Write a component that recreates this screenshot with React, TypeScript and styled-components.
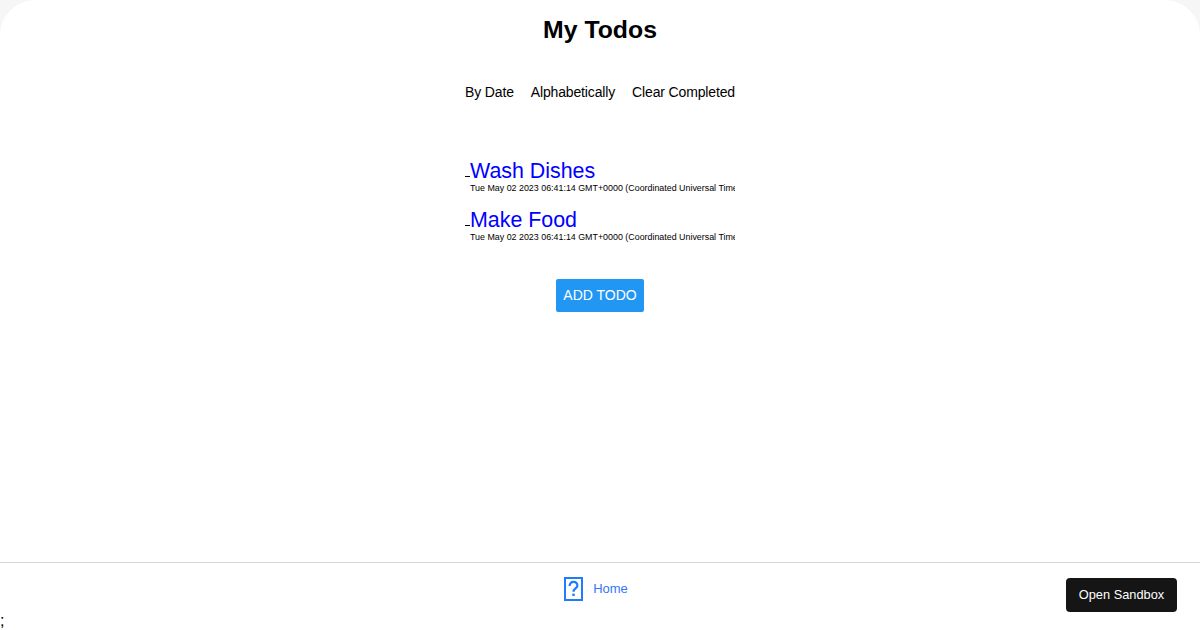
import React from 'react';
import styled, { createGlobalStyle } from 'styled-components';

const GlobalStyle = createGlobalStyle`
	html, body {
		margin: 0;
		padding: 0;
		background: #f6f6f6;
		font-family: "Liberation Sans", Arial, sans-serif;
	}
`

const Page = styled.div`
	width: 1200px;
	height: 630px;
	overflow: hidden;
	display: flex;
	flex-direction: column;
	background: #ffffff;
`

const CornerBackdrop = styled.div`
	background: #f6f6f6;
`

const Screen = styled.main`
	height: 562px;
	box-sizing: border-box;
	padding-top: 15px;
	background: #ffffff;
	border-radius: 35px 35px 0 0;
	display: flex;
	flex-direction: column;
	align-items: center;
`

const Title = styled.h1`
	margin: 0;
	font-size: 24.8px;
	line-height: 29px;
	font-weight: bold;
	color: #000000;
`

const Column = styled.div`
	width: 270px;
	display: flex;
	flex-direction: column;
`

const SortBar = styled.div`
	margin-top: 39px;
	display: flex;
	justify-content: space-between;
	font-size: 14px;
	line-height: 18px;
	letter-spacing: -0.14px;
	color: #000000;
	white-space: nowrap;
`

const TodoList = styled.ul`
	list-style: none;
	margin: 57px 0 0;
	padding: 0;
	display: flex;
	flex-direction: column;
	gap: 14px;
`

const TodoRow = styled.li`
	display: flex;
	align-items: flex-start;
	overflow: hidden;
`

const Dash = styled.span`
	width: 5px;
	flex: none;
	margin-top: 18px;
	height: 1px;
	background: #000000;
`

const TodoBody = styled.div`
	min-width: 0;
	flex: 1;
`

const TodoName = styled.div`
	font-size: 21.4px;
	line-height: 26px;
	color: #0000ff;
	white-space: nowrap;
`

const TodoDate = styled.div`
	font-size: 8.9px;
	line-height: 9px;
	color: #000000;
	white-space: nowrap;
	overflow: hidden;
`

const AddButton = styled.button`
	align-self: center;
	margin-top: 37px;
	width: 88px;
	height: 33px;
	padding: 0 0 2px;
	border: none;
	border-radius: 2px;
	background: #2196f3;
	color: #ffffff;
	font-family: inherit;
	font-size: 14px;
`

const Footer = styled.footer`
	position: relative;
	height: 67px;
	border-top: 1px solid #d8d8d8;
	display: flex;
	justify-content: center;
`

const HomeLink = styled.a`
	margin-top: 14px;
	height: 24px;
	padding-right: 8px;
	display: flex;
	align-items: center;
	gap: 10px;
	color: #3478f6;
	font-size: 13px;
	text-decoration: none;
`

const HomeLabel = styled.span`
	margin-bottom: 1px;
`

const SandboxButton = styled.button`
	position: absolute;
	top: 15px;
	right: 23px;
	width: 111px;
	height: 34px;
	padding: 0 0 2px;
	border: none;
	border-radius: 4px;
	background: #151515;
	color: #ffffff;
	font-family: inherit;
	font-size: 12.8px;
`

const Stray = styled.span`
	position: absolute;
	left: 0;
	top: 49px;
	font-size: 16px;
	line-height: 18px;
	color: #000000;
`

const todos = [
	{ name: 'Wash Dishes', date: 'Tue May 02 2023 06:41:14 GMT+0000 (Coordinated Universal Time)' },
	{ name: 'Make Food', date: 'Tue May 02 2023 06:41:14 GMT+0000 (Coordinated Universal Time)' },
]

function MissingIcon() {
	return (
		<svg width="19" height="24" viewBox="0 0 19 24" fill="none">
			<rect x="1" y="1" width="17" height="22" stroke="#1f7bff" strokeWidth="2" />
			<path d="M5.6 9c0-2.6 1.7-4.2 3.9-4.2s3.9 1.5 3.9 3.6c0 3-3.9 3.1-3.9 6.4" stroke="#1f7bff" strokeWidth="2.2" />
			<rect x="8.3" y="16.6" width="2.4" height="2.4" fill="#1f7bff" />
		</svg>
	)
}

export default function App() {
	return (
		<Page>
			<GlobalStyle />
			<CornerBackdrop>
				<Screen>
					<Title>My Todos</Title>
					<Column>
						<SortBar>
							<span>By Date</span>
							<span>Alphabetically</span>
							<span>Clear Completed</span>
						</SortBar>
						<TodoList>
							{todos.map((todo) => (
								<TodoRow key={todo.name}>
									<Dash />
									<TodoBody>
										<TodoName>{todo.name}</TodoName>
										<TodoDate>{todo.date}</TodoDate>
									</TodoBody>
								</TodoRow>
							))}
						</TodoList>
						<AddButton>ADD TODO</AddButton>
					</Column>
				</Screen>
			</CornerBackdrop>
			<Footer>
				<HomeLink href="#">
					<MissingIcon />
					<HomeLabel>Home</HomeLabel>
				</HomeLink>
				<SandboxButton>Open Sandbox</SandboxButton>
				<Stray>;</Stray>
			</Footer>
		</Page>
	)
}
